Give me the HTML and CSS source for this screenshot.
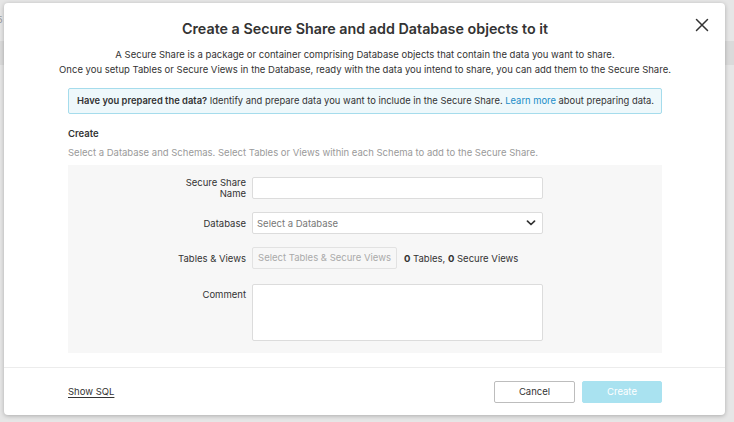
FILE: index.html
```html
<!DOCTYPE html>
<html>
<head>
<meta charset="utf-8">
<link rel="stylesheet" href="styles.css">
</head>
<body>
<div class="backdrop">
  <div class="bg-band"></div>
  <span class="bg-glyph">5</span>
  <div class="modal">
    <button class="close" aria-label="Close">
      <svg width="14" height="14" viewBox="0 0 14 14"><path d="M1.5 1.5 L12.5 12.5 M12.5 1.5 L1.5 12.5" stroke="#333" stroke-width="1.5" fill="none" stroke-linecap="round"/></svg>
    </button>
    <div class="body">
      <h1 class="title">Create a Secure Share and add Database objects to it</h1>
      <p class="desc">A Secure Share is a package or container comprising Database objects that contain the data you want to share.<br>Once you setup Tables or Secure Views in the Database, ready with the data you intend to share, you can add them to the Secure Share.</p>
      <div class="info"><b>Have you prepared the data?</b> Identify and prepare data you want to include in the Secure Share. <a href="#" class="link">Learn more</a> about preparing data.</div>
      <div class="section-title">Create</div>
      <div class="section-sub">Select a Database and Schemas. Select Tables or Views within each Schema to add to the Secure Share.</div>
      <div class="panel">
        <div class="row">
          <label class="lbl">Secure Share<br>Name</label>
          <div class="input"></div>
        </div>
        <div class="row">
          <label class="lbl">Database</label>
          <div class="input select"><span class="ph">Select a Database</span>
            <svg width="10" height="6" viewBox="0 0 10 6"><path d="M1.5 1.2 L5 4.5 L8.5 1.2" stroke="#333" stroke-width="1.7" fill="none" stroke-linecap="round" stroke-linejoin="round"/></svg>
          </div>
        </div>
        <div class="row">
          <label class="lbl">Tables &amp; Views</label>
          <div class="btn-disabled">Select Tables &amp; Secure Views</div>
          <div class="counts"><b>0</b> Tables, <b>0</b> Secure Views</div>
        </div>
        <div class="row row-top">
          <label class="lbl lbl-top">Comment</label>
          <div class="input textarea"></div>
        </div>
      </div>
    </div>
    <div class="footer">
      <a href="#" class="show-sql">Show SQL</a>
      <div class="actions">
        <button class="btn cancel">Cancel</button>
        <button class="btn create">Create</button>
      </div>
    </div>
  </div>
</div>
</body>
</html>
```
FILE: styles.css
```css
* { box-sizing: border-box; }
html, body { margin: 0; padding: 0; }
body {
  font-family: Inter, "Liberation Sans", sans-serif;
  color: #333;
  background: #e6e6e6;
  width: 734px;
  height: 422px;
  overflow: hidden;
}
.backdrop {
  position: relative;
  width: 734px;
  height: 422px;
  padding: 3px 0 0 4px;
}
.bg-band {
  position: absolute;
  left: 0; right: 0;
  top: 41px; height: 24px;
  background: #dadada;
}
.bg-glyph {
  position: absolute;
  left: -3px; top: 14px;
  font-size: 9px;
  color: #999;
}
.modal {
  position: relative;
  width: 721px;
  height: 412px;
  background: #fff;
  border-radius: 4px;
  box-shadow: 0 1px 4px rgba(0,0,0,0.25);
  display: flex;
  flex-direction: column;
}
.close {
  position: absolute;
  right: 16px;
  top: 15px;
  width: 14px;
  height: 14px;
  padding: 0;
  border: 0;
  background: none;
  display: flex;
}
.body {
  padding: 14px 63px 0 64px;
  flex: 1;
}
.title {
  margin: 0;
  font-size: 14.3px;
  font-weight: 600;
  line-height: 24px;
  text-align: center;
  color: #333;
}
.desc {
  margin: 6px -30px 0;
  font-size: 9.5px;
  line-height: 15px;
  text-align: center;
  white-space: nowrap;
  color: #333;
}
.info {
  margin-top: 11px;
  height: 26px;
  border: 1px solid #a5dcec;
  background: #eef8fb;
  border-radius: 2px;
  font-size: 9.4px;
  line-height: 24px;
  padding: 0 0 0 8px;
  white-space: nowrap;
  color: #333;
}
.info b { font-weight: 600; }
.link { color: #1a8cc7; text-decoration: none; }
.section-title {
  margin-top: 12px;
  font-size: 9.5px;
  font-weight: 600;
  line-height: 15px;
}
.section-sub {
  margin-top: 4px;
  font-size: 9.5px;
  line-height: 15px;
  color: #9a9a9a;
}
.panel {
  margin-top: 5px;
  background: #f7f7f7;
  padding: 12px 0 12px;
  display: flex;
  flex-direction: column;
  gap: 13px;
}
.row {
  display: flex;
  align-items: center;
  gap: 6px;
  height: 22px;
}
.row-top { align-items: flex-start; margin-top: 2px; height: 57px; }
.lbl {
  width: 178px;
  flex: none;
  text-align: right;
  font-size: 9.5px;
  line-height: 11px;
  color: #333;
}
.lbl-top { padding-top: 5px; }
.input {
  width: 291px;
  height: 22px;
  background: #fff;
  border: 1px solid #dcdcdc;
  border-radius: 2px;
}
.select {
  display: flex;
  align-items: center;
  justify-content: space-between;
  padding: 0 6px 0 4px;
}
.ph { font-size: 9.5px; color: #777; }
.btn-disabled {
  width: 145px;
  height: 22px;
  border: 1px solid #e2e2e2;
  border-radius: 2px;
  background: #f7f7f7;
  font-size: 9.5px;
  line-height: 20px;
  text-align: center;
  white-space: nowrap;
  color: #aaa;
}
.counts {
  margin-left: 1px;
  font-size: 9.5px;
  color: #333;
}
.counts b { font-weight: 700; }
.textarea { height: 57px; }
.footer {
  height: 48px;
  border-top: 1px solid #ececec;
  display: flex;
  align-items: center;
  justify-content: space-between;
  padding: 0 63px 0 64px;
}
.show-sql {
  font-size: 9.5px;
  color: #333;
  text-decoration: underline;
  text-underline-offset: 2px;
}
.actions { display: flex; gap: 7px; }
.btn {
  width: 81px;
  height: 22px;
  font-family: inherit;
  font-size: 9.5px;
  border-radius: 2px;
  padding: 0;
}
.cancel {
  background: #fff;
  border: 1px solid #bdbdbd;
  color: #333;
}
.create {
  width: 80px;
  background: #a9e2f0;
  border: 1px solid #a9e2f0;
  color: #fff;
}
```
